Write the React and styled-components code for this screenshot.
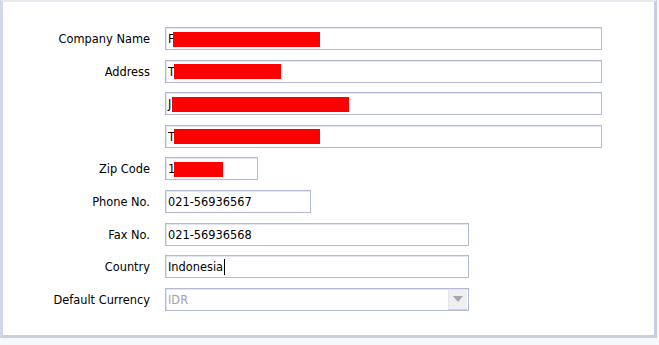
import React from "react";
import styled, { createGlobalStyle } from "styled-components";

const Global = createGlobalStyle`
  html, body { margin: 0; padding: 0; background: #f7f8fb; }
  body { font-family: "DejaVu Sans", Tahoma, Verdana, sans-serif; font-size: 11.4px; color: #000; }
`;

const Panel = styled.div`
  box-sizing: border-box;
  width: 657px;
  height: 338px;
  background: #fff;
  border-top: 2px solid #e6e9f0;
  border-left: 3px solid #d2d7e9;
  border-right: 3px solid #c7cde2;
  border-bottom: 3px solid #c7cde2;
  padding-top: 25px;
`;

const Form = styled.div`
  display: grid;
  grid-template-columns: 147px 1fr;
  grid-auto-rows: 23px;
  column-gap: 15px;
  row-gap: 9.6px;
  align-items: center;
`;

const Label = styled.label`
  text-align: right;
  white-space: nowrap;
  height: 23px;
  line-height: 24px;
`;

const Field = styled.div`
  box-sizing: border-box;
  position: relative;
  width: ${(p) => p.$w}px;
  height: 23px;
  border: 1px solid #b4bad4;
  box-shadow: inset 1px 1px 0 #e3e6f0;
  background: #fff;
  padding: 1px 2px 0;
  display: flex;
  align-items: center;
  color: ${(p) => (p.$disabled ? "#a3a3a3" : "#000")};
  white-space: nowrap;
`;

const Redact = styled.span`
  display: inline-block;
  width: ${(p) => p.$w}px;
  height: 15px;
  background: #ff0000;
  margin-left: ${(p) => p.$ml || 0}px;
`;

const Caret = styled.span`
  display: inline-block;
  width: 1px;
  height: 16px;
  background: #000;
  margin-left: 1px;
`;

const DropButton = styled.div`
  position: absolute;
  right: 1px;
  top: 1px;
  width: 18px;
  height: 19px;
  background: #eeeff2;
  border-left: 1px solid #e2e4ea;
  border-bottom: 1px solid #cfd2da;
  display: flex;
  align-items: center;
  justify-content: center;
`;

const Spacer = styled.div``;

export default function App() {
  return (
    <>
      <Global />
      <Panel>
        <Form>
          <Label>Company Name</Label>
          <Field $w={437}>F<Redact $w={147} $ml={-2} /></Field>

          <Label>Address</Label>
          <Field $w={437}>T<Redact $w={107} $ml={-1} /></Field>

          <Spacer />
          <Field $w={437}>J<Redact $w={177} $ml={1} /></Field>

          <Spacer />
          <Field $w={437}>T<Redact $w={146} $ml={-1} /></Field>

          <Label>Zip Code</Label>
          <Field $w={93}>1<Redact $w={49} $ml={-1} /></Field>

          <Label>Phone No.</Label>
          <Field $w={146}>021-56936567</Field>

          <Label>Fax No.</Label>
          <Field $w={304}>021-56936568</Field>

          <Label>Country</Label>
          <Field $w={304}>Indonesia<Caret /></Field>

          <Label>Default Currency</Label>
          <Field $w={304} $disabled>
            IDR
            <DropButton>
              <svg width="10" height="6" viewBox="0 0 10 6">
                <path d="M0 0 H10 L5 6 Z" fill="#a5a7ad" />
              </svg>
            </DropButton>
          </Field>
        </Form>
      </Panel>
    </>
  );
}
